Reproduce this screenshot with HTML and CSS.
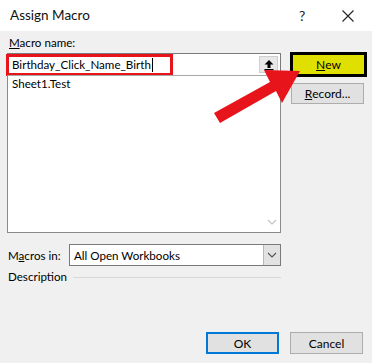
FILE: index.html
```html
<!DOCTYPE html>
<html>
<head>
<meta charset="utf-8">
<link rel="stylesheet" href="styles.css">
</head>
<body>
<div class="dialog">
  <div class="titlebar">
    <span class="title">Assign Macro</span>
    <span class="help">?</span>
    <span class="close">
      <svg width="12" height="12" viewBox="0 0 12 12"><path d="M0.5 0.5 L11.5 11.5 M11.5 0.5 L0.5 11.5" stroke="#222" stroke-width="1.1" fill="none"/></svg>
    </span>
  </div>
  <div class="body">
    <div class="main">
      <div class="left">
        <div class="label"><u>M</u>acro name:</div>
        <div class="namebox">
          <span class="nametext">Birthday_Click_Name_Birth<span class="caret"></span></span>
          <span class="upbtn">
            <svg width="12" height="12" viewBox="0 0 12 12"><path d="M6 1 L1.5 5.5 H4.5 V9 H7.5 V5.5 H10.5 Z" fill="#000"/><rect x="1.5" y="10" width="9" height="1.4" fill="#000"/></svg>
          </span>
          <div class="redbox"></div>
        </div>
        <div class="list">
          <div class="item">Sheet1.Test</div>
          <div class="scroll">
            <svg width="10" height="6" viewBox="0 0 10 6"><path d="M1 1 L5 5 L9 1" stroke="#c4c4c4" stroke-width="1.2" fill="none"/></svg>
          </div>
        </div>
        <div class="inrow">
          <span class="inlabel">M<u>a</u>cros in:</span>
          <div class="select">
            <span class="seltext">All Open Workbooks</span>
            <span class="selbtn">
              <svg width="10" height="6" viewBox="0 0 10 6"><path d="M1 1 L5 5 L9 1" stroke="#555" stroke-width="1.1" fill="none"/></svg>
            </span>
          </div>
        </div>
        <div class="descrow">
          <span>Description</span>
          <span class="rule"></span>
        </div>
      </div>
      <div class="right">
        <div class="btn newbtn"><u>N</u>ew</div>
        <div class="btn recbtn"><u>R</u>ecord...</div>
      </div>
    </div>
    <div class="footer">
      <div class="btn okbtn">OK</div>
      <div class="btn cancelbtn">Cancel</div>
    </div>
  </div>
  <svg class="arrow" width="372" height="363" viewBox="0 0 372 363">
    <path d="M214 113 L270 82 L264 70 L300 71 L282 103 L276 91 L220 123 Z" fill="#e8141b"/>
  </svg>
</div>
</body>
</html>
```
FILE: styles.css
```css
* { box-sizing: border-box; }
body {
  margin: 0;
  font-family: Lato, "Noto Sans", sans-serif;
  font-size: 11.6px;
  color: #000;
  background: #f0f0f0;
}
.dialog {
  position: relative;
  width: 372px;
  height: 363px;
  background: #f0f0f0;
  overflow: hidden;
}
.titlebar {
  height: 31px;
  background: #fff;
  display: flex;
  align-items: center;
}
.title {
  font-size: 13.5px;
  margin-left: 10px;
  flex: 1;
  color: #111;
  padding-bottom: 1px;
}
.help {
  font-size: 14px;
  width: 20px;
  margin-right: 23px;
  color: #222;
}
.close {
  width: 12px;
  height: 12px;
  margin-right: 18px;
  display: flex;
}
.body {
  padding: 4px 0 0 7px;
}
.main {
  display: flex;
  gap: 9px;
}
.left {
  width: 274px;
}
.label {
  height: 18px;
  line-height: 16px;
  padding-left: 2px;
}
.namebox {
  position: relative;
  height: 22px;
  background: #fff;
  border: 1px solid #7a7a7a;
  border-bottom: none;
  display: flex;
  align-items: center;
}
.nametext {
  padding-left: 4px;
  flex: 1;
  display: flex;
  align-items: center;
}
.caret {
  display: inline-block;
  width: 1px;
  height: 14px;
  background: #000;
  margin-left: 1px;
}
.upbtn {
  width: 19px;
  height: 17px;
  margin-right: 2px;
  background: #e8e8e8;
  border: 1px solid #cfcfcf;
  display: flex;
  align-items: center;
  justify-content: center;
}
.redbox {
  position: absolute;
  left: -2px;
  top: 0;
  width: 167px;
  height: 22px;
  border: 3px solid #e8141b;
}
.list {
  position: relative;
  height: 158px;
  background: #fff;
  border: 1px solid #8a8a8a;
  border-top: 1px solid #a8a8a8;
}
.item {
  padding: 1px 0 0 4px;
  line-height: 14px;
}
.scroll {
  position: absolute;
  right: 0;
  top: 0;
  bottom: 0;
  width: 17px;
  display: flex;
  align-items: flex-end;
  justify-content: center;
  padding-bottom: 7px;
}
.inrow {
  margin-top: 11px;
  display: flex;
  align-items: center;
}
.inlabel {
  width: 62px;
  padding-left: 1px;
}
.select {
  flex: 1;
  height: 22px;
  background: #fff;
  border: 1px solid #7a7a7a;
  display: flex;
  align-items: center;
}
.seltext {
  flex: 1;
  padding-left: 4px;
}
.selbtn {
  width: 17px;
  height: 20px;
  background: #e2e2e2;
  border-left: 1px solid #b8b8b8;
  display: flex;
  align-items: center;
  justify-content: center;
}
.descrow {
  margin-top: 2px;
  display: flex;
  align-items: center;
  gap: 6px;
  height: 17px;
  padding-left: 1px;
}
.rule {
  flex: 1;
  height: 1px;
  background: #d8d8d8;
  margin-top: 1px;
}
.right {
  width: 77px;
  padding-top: 17px;
  display: flex;
  flex-direction: column;
  align-items: flex-start;
}
.btn {
  display: flex;
  align-items: center;
  justify-content: center;
  background: #e1e1e1;
  border: 1px solid #adadad;
  font-size: 12px;
}
.newbtn {
  width: 77px;
  height: 25px;
  background: #e0e000;
  border: 3px solid #000;
}
.recbtn {
  width: 73px;
  height: 21px;
  margin-top: 6px;
  margin-left: 1px;
}
.footer {
  margin-top: 47px;
  display: flex;
  gap: 11px;
  padding-left: 199px;
}
.okbtn {
  width: 73px;
  height: 22px;
  border: 2px solid #0078d7;
}
.cancelbtn {
  width: 73px;
  height: 22px;
}
.arrow {
  position: absolute;
  left: 0;
  top: 0;
  pointer-events: none;
}
```
